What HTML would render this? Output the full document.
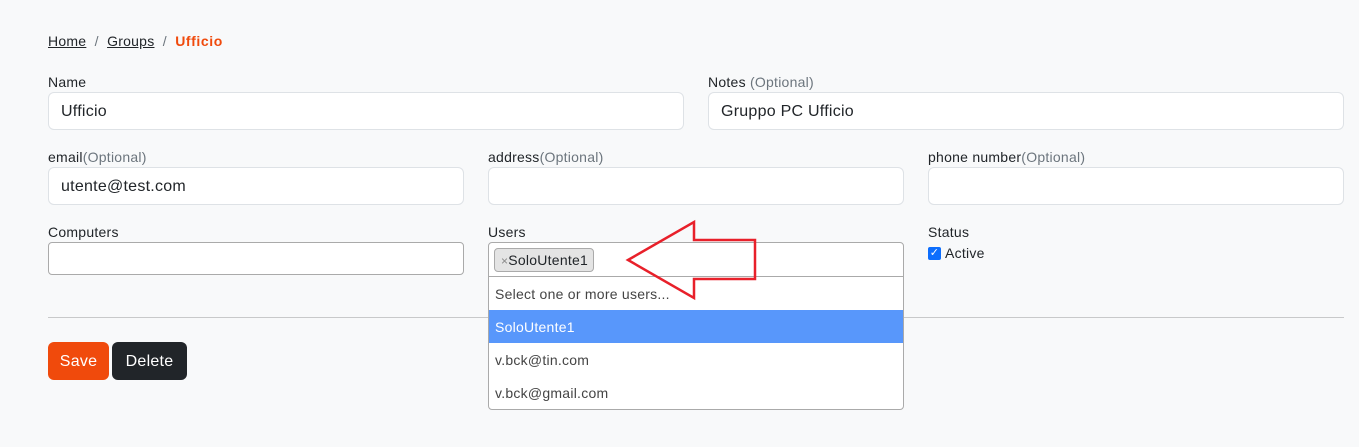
<!DOCTYPE html>
<html><head><meta charset="utf-8"><style>
body{margin:0;width:1359px;height:447px;background:#f8f9fa;font-family:"Liberation Sans",sans-serif;color:#212529;position:relative;overflow:hidden;letter-spacing:0.25px}
.a{position:absolute}
.lbl{font-size:14px;color:#212529}
.opt{color:#6c757d}
.inp{position:absolute;background:#fff;border:1px solid #dee2e6;border-radius:6px;box-sizing:border-box;font-size:16px;padding-left:12px;line-height:38px;height:38px}
a{color:#212529}
</style></head><body>
<div class="a" style="left:48px;top:33px;font-size:14px"><a href="#">Home</a> <span style="color:#6c757d">&nbsp;/&nbsp;</span> <a href="#">Groups</a> <span style="color:#6c757d">&nbsp;/&nbsp;</span> <b style="color:#f04a0c;letter-spacing:0.6px">Ufficio</b></div>

<div class="a lbl" style="left:48px;top:74px">Name</div>
<div class="inp" style="left:48px;top:92px;width:636px">Ufficio</div>
<div class="a lbl" style="left:708px;top:74px">Notes <span class="opt">(Optional)</span></div>
<div class="inp" style="left:708px;top:92px;width:636px">Gruppo PC Ufficio</div>

<div class="a lbl" style="left:48px;top:149px">email<span class="opt">(Optional)</span></div>
<div class="inp" style="left:48px;top:167px;width:416px">utente@test.com</div>
<div class="a lbl" style="left:488px;top:149px">address<span class="opt">(Optional)</span></div>
<div class="inp" style="left:488px;top:167px;width:416px"></div>
<div class="a lbl" style="left:928px;top:149px">phone number<span class="opt">(Optional)</span></div>
<div class="inp" style="left:928px;top:167px;width:416px"></div>

<div class="a lbl" style="left:48px;top:224px">Computers</div>
<div class="a" style="left:48px;top:242px;width:416px;height:33px;background:#fff;border:1px solid #aaa;border-radius:4px;box-sizing:border-box"></div>
<div class="a lbl" style="left:488px;top:224px">Users</div>
<div class="a" style="left:488px;top:242px;width:416px;height:168px;background:#fff;border:1px solid #aaa;border-radius:4px;box-sizing:border-box;overflow:hidden">
 <div style="height:34px;border-bottom:1px solid #aaa;box-sizing:border-box;position:relative">
  <div style="position:absolute;left:5px;top:5px;height:22px;padding:0 5px 0 6px;background:#e4e4e4;border:1px solid #aaa;border-radius:4px;font-size:14px;line-height:23px"><span style="color:#888;font-size:12px">×</span>SoloUtente1</div>
 </div>
 <div style="height:33px;line-height:35px;padding-left:6px;font-size:14px;color:#444">Select one or more users...</div>
 <div style="height:33px;line-height:35px;padding-left:6px;font-size:14px;color:#fff;background:#5897fb">SoloUtente1</div>
 <div style="height:33px;line-height:35px;padding-left:6px;font-size:14px;color:#444">v.bck@tin.com</div>
 <div style="height:33px;line-height:35px;padding-left:6px;font-size:14px;color:#444">v.bck@gmail.com</div>
</div>
<div class="a lbl" style="left:928px;top:224px">Status</div>
<div class="a lbl" style="left:928px;top:245px;display:flex;align-items:center"><span style="display:inline-block;width:13px;height:13px;background:#0d6efd;border-radius:2px;margin-right:4px;color:#fff;font-size:11px;line-height:13px;text-align:center">✓</span>Active</div>

<div class="a" style="left:48px;top:317px;width:440px;height:1px;background:#c8c9ca"></div>
<div class="a" style="left:904px;top:317px;width:440px;height:1px;background:#c8c9ca"></div>

<div class="a" style="left:48px;top:342px;width:61px;height:38px;background:#f04a0c;border-radius:6px;color:#fff;font-size:16px;line-height:40px;text-align:center">Save</div>
<div class="a" style="left:112px;top:342px;width:75px;height:38px;background:#212529;border-radius:6px;color:#fff;font-size:16px;line-height:40px;text-align:center">Delete</div>

<svg class="a" style="left:0;top:0" width="1359" height="447"><polygon points="628,260 694,222 694,240 755,240 755,279 694,279 694,298" fill="none" stroke="#e8202a" stroke-width="2.5"/></svg>
</body></html>
